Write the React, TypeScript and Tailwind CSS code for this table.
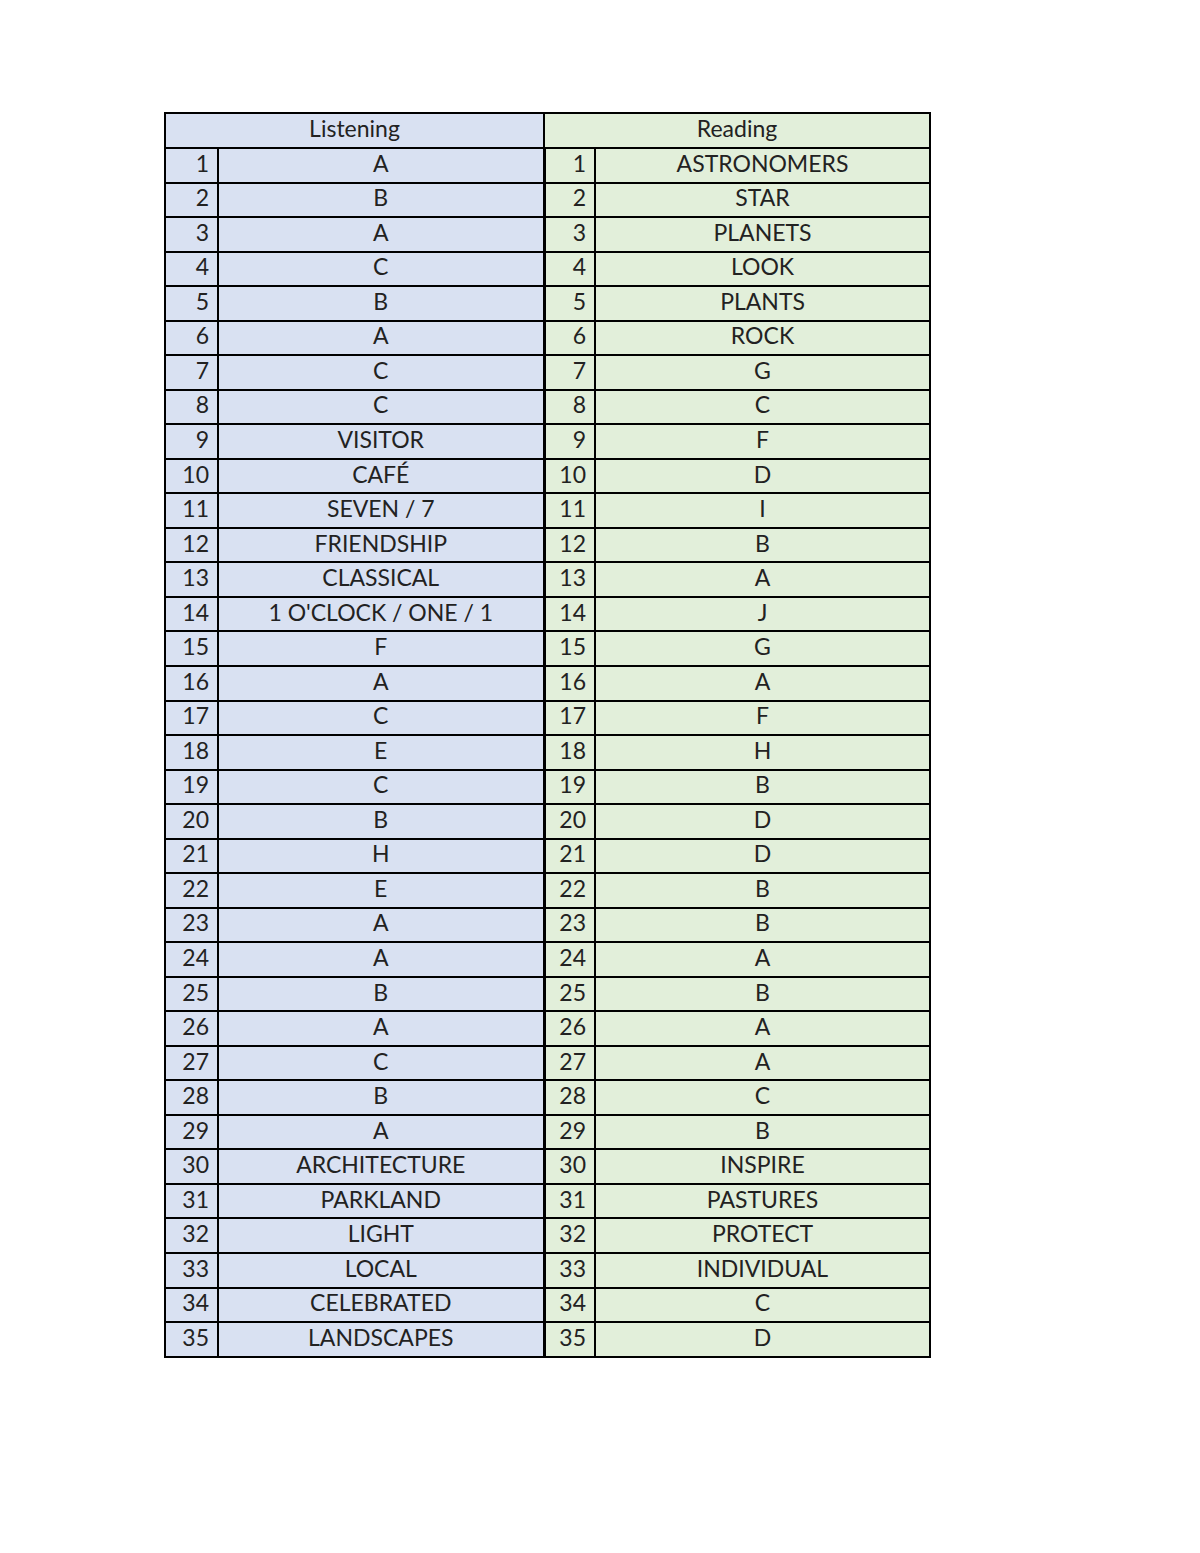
const listening = [
  "A", "B", "A", "C", "B", "A", "C", "C", "VISITOR", "CAFÉ",
  "SEVEN / 7", "FRIENDSHIP", "CLASSICAL", "1 O'CLOCK / ONE / 1", "F", "A", "C", "E", "C", "B",
  "H", "E", "A", "A", "B", "A", "C", "B", "A", "ARCHITECTURE",
  "PARKLAND", "LIGHT", "LOCAL", "CELEBRATED", "LANDSCAPES",
];

const reading = [
  "ASTRONOMERS", "STAR", "PLANETS", "LOOK", "PLANTS", "ROCK", "G", "C", "F", "D",
  "I", "B", "A", "J", "G", "A", "F", "H", "B", "D",
  "D", "B", "B", "A", "B", "A", "A", "C", "B", "INSPIRE",
  "PASTURES", "PROTECT", "INDIVIDUAL", "C", "D",
];

export default function App() {
  return (
    <div className="w-[1200px] h-[1553px] bg-white pt-[112px] pl-[164px] font-['Lato',sans-serif] text-[23px] text-[#222]">
      <table className="border-collapse border-2 border-black table-fixed w-[765px]">
        <colgroup>
          <col className="w-[53px]" />
          <col className="w-[326px]" />
          <col className="w-[51px]" />
          <col className="w-[335px]" />
        </colgroup>
        <thead>
          <tr className="h-[35px]">
            <th colSpan={2} className="bg-[#d9e1f2] border-2 border-black font-normal text-center leading-none pb-[4px]">
              Listening
            </th>
            <th colSpan={2} className="bg-[#e2efda] border-2 border-black font-normal text-center leading-none pb-[4px]">
              Reading
            </th>
          </tr>
        </thead>
        <tbody>
          {listening.map((ans, i) => (
            <tr key={i} className="h-[34.54px]">
              <td className="bg-[#d9e1f2] border-2 border-black text-right pr-[8px] leading-none pb-[4px]">{i + 1}</td>
              <td className="bg-[#d9e1f2] border-2 border-black text-center leading-none pb-[4px]">{ans}</td>
              <td className="bg-[#e2efda] border-2 border-l-[3px] border-black text-right pr-[8px] leading-none pb-[4px]">{i + 1}</td>
              <td className="bg-[#e2efda] border-2 border-black text-center leading-none pb-[4px]">{reading[i]}</td>
            </tr>
          ))}
        </tbody>
      </table>
    </div>
  );
}
